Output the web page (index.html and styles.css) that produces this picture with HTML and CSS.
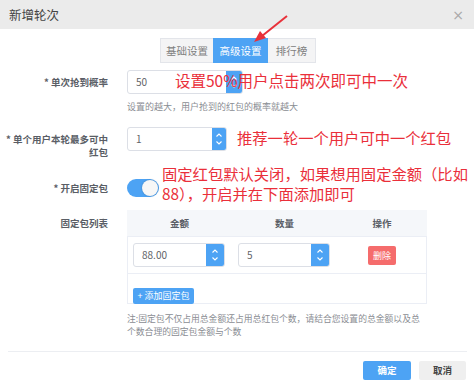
FILE: index.html
```html
<!DOCTYPE html>
<html lang="zh-CN">

<head>
    <meta charset="UTF-8" />
    <title>新增轮次</title>
    <link rel="stylesheet" href="styles.css">
</head>

<body>
    <div class="dialog">
        <div class="dialog-header">
            <span class="dialog-title">新增轮次</span>
            <span class="dialog-close">×</span>
        </div>

        <div class="tabs">
            <span class="tab tab-1">基础设置</span>
            <span class="tab tab-2 active">高级设置</span>
            <span class="tab tab-3">排行榜</span>
        </div>

        <div class="form">
            <div class="form-row row-rate">
                <label class="form-label">* 单次抢到概率</label>
                <div class="form-content">
                    <div class="num-input wide">
                        <span class="num-value">50</span>
                        <span class="spinner">
                            <svg width="8" height="14" viewBox="0 0 8 14"><path d="M1.5 4.5 L4 2 L6.5 4.5 M1.5 9.5 L4 12 L6.5 9.5" fill="none" stroke="#fff" stroke-width="1.1"/></svg>
                        </span>
                    </div>
                    <div class="hint">设置的越大，用户抢到的红包的概率就越大</div>
                </div>
            </div>

            <div class="form-row row-max">
                <label class="form-label two-line">* 单个用户本轮最多可中<br>红包</label>
                <div class="form-content">
                    <div class="num-input narrow">
                        <span class="num-value">1</span>
                        <span class="spinner">
                            <svg width="8" height="14" viewBox="0 0 8 14"><path d="M1.5 4.5 L4 2 L6.5 4.5 M1.5 9.5 L4 12 L6.5 9.5" fill="none" stroke="#fff" stroke-width="1.1"/></svg>
                        </span>
                    </div>
                </div>
            </div>

            <div class="form-row row-switch">
                <label class="form-label">* 开启固定包</label>
                <div class="form-content">
                    <span class="switch"><span class="switch-knob"></span></span>
                </div>
            </div>

            <div class="form-row row-list">
                <label class="form-label">固定包列表</label>
                <div class="form-content">
                    <div class="fixed-table">
                        <div class="table-head">
                            <span>金额</span>
                            <span>数量</span>
                            <span>操作</span>
                        </div>
                        <div class="table-row">
                            <div class="cell">
                                <div class="num-input cell-input">
                                    <span class="num-value">88.00</span>
                                    <span class="spinner">
                                        <svg width="8" height="14" viewBox="0 0 8 14"><path d="M1.5 4.5 L4 2 L6.5 4.5 M1.5 9.5 L4 12 L6.5 9.5" fill="none" stroke="#fff" stroke-width="1.1"/></svg>
                                    </span>
                                </div>
                            </div>
                            <div class="cell">
                                <div class="num-input cell-input">
                                    <span class="num-value">5</span>
                                    <span class="spinner">
                                        <svg width="8" height="14" viewBox="0 0 8 14"><path d="M1.5 4.5 L4 2 L6.5 4.5 M1.5 9.5 L4 12 L6.5 9.5" fill="none" stroke="#fff" stroke-width="1.1"/></svg>
                                    </span>
                                </div>
                            </div>
                            <div class="cell cell-center">
                                <span class="btn-delete">删除</span>
                            </div>
                        </div>
                        <div class="table-add">
                            <span class="btn-add">+ 添加固定包</span>
                        </div>
                    </div>
                    <div class="note">注:固定包不仅占用总金额还占用总红包个数，请结合您设置的总金额以及总<br>个数合理的固定包金额与个数</div>
                </div>
            </div>
        </div>

        <div class="dialog-footer">
            <span class="btn btn-primary">确定</span>
            <span class="btn btn-default">取消</span>
        </div>

        <!-- red notes drawn on top of the screenshot -->
        <svg class="arrow" width="40" height="36" viewBox="0 0 40 36">
            <path d="M37 2 L12 22" stroke="#e8313a" stroke-width="2" fill="none"/>
            <path d="M4 28 L10 17 L16 24 Z" fill="#e8313a"/>
        </svg>
        <div class="annot annot-1">设置50%用户点击两次即可中一次</div>
        <div class="annot annot-2">推荐一轮一个用户可中一个红包</div>
        <div class="annot annot-3">固定红包默认关闭，如果想用固定金额（比如<br>88），开启并在下面添加即可</div>
    </div>
</body>

</html>
```

FILE: styles.css
```css
* {
    margin: 0;
    padding: 0;
    box-sizing: border-box;
}

html,
body {
    width: 474px;
    height: 388px;
    overflow: hidden;
    background: #fff;
    font-family: "Noto Sans CJK SC", "Noto Sans", sans-serif;
    color: #606266;
}

.dialog {
    position: relative;
    width: 474px;
    height: 388px;
}

.dialog-header {
    height: 29px;
    background: #ebebeb;
    display: flex;
    align-items: center;
    justify-content: space-between;
    padding: 0 10px 0 9px;
}

.dialog-title {
    font-size: 12.5px;
    color: #444;
}

.dialog-close {
    font-size: 14px;
    color: #a8a8a8;
    font-family: "DejaVu Sans", sans-serif;
}

.tabs {
    display: flex;
    margin: 9px 0 0 160px;
}

.tab {
    height: 25px;
    line-height: 23px;
    font-size: 10.5px;
    text-align: center;
    color: #808080;
    background: #f4f4f5;
    border: 1px solid #e3e5ea;
}

.tab-1 {
    width: 53px;
    border-right: none;
}

.tab-2 {
    width: 55px;
}

.tab-3 {
    width: 48px;
    border-left: none;
}

.tab.active {
    background: #4da3f4;
    border-color: #4da3f4;
    color: #fff;
}

.form {
    margin-top: 7px;
}

.form-row {
    display: grid;
    grid-template-columns: 127px 1fr;
}

.form-label {
    text-align: right;
    padding-right: 19px;
    font-size: 9.5px;
    font-weight: bold;
    color: #5a5e66;
}

.row-rate .form-label {
    line-height: 24px;
}

.row-max {
    margin-top: 14px;
}

.form-label.two-line {
    line-height: 13px;
    padding-top: 6px;
}

.row-switch {
    margin-top: 20px;
}

.row-switch .form-label {
    line-height: 18px;
}

.row-list {
    margin-top: 13px;
}

.row-list .form-label {
    line-height: 26px;
}

.num-input {
    height: 24px;
    display: flex;
    align-items: stretch;
    border: 1px solid #dcdfe6;
    border-radius: 3px;
    background: #fff;
    overflow: hidden;
}

.num-input.wide {
    width: 116px;
}

.num-input.narrow {
    width: 100px;
}

.num-value {
    flex: 1;
    font-size: 10px;
    line-height: 22px;
    padding-left: 8px;
    color: #606266;
}

.spinner {
    width: 16px;
    background: #4da3f4;
    display: flex;
    align-items: center;
    justify-content: center;
}

.narrow .spinner {
    width: 14px;
}

.cell-input .spinner {
    width: 18px;
}

.hint {
    margin-top: 6px;
    font-size: 9px;
    line-height: 13px;
    color: #8a8d93;
}

.switch {
    width: 32px;
    height: 18px;
    border-radius: 9px;
    background: #4da3f4;
    display: flex;
    justify-content: flex-end;
    align-items: center;
    padding: 1px;
}

.switch-knob {
    width: 16px;
    height: 16px;
    border-radius: 50%;
    background: #f7f7f7;
    box-shadow: 0 0 2px rgba(0, 0, 0, 0.25);
}

.fixed-table {
    width: 300px;
    border: 1px solid #ebeef5;
    border-top: none;
}

.table-head {
    display: grid;
    grid-template-columns: 105px 105px 90px;
    height: 27px;
    background: #f5f7fa;
    margin: 0 -1px;
    font-size: 9.5px;
    font-weight: bold;
    color: #5a5e66;
    border-bottom: 1px solid #ebeef5;
}

.table-head span {
    text-align: center;
    line-height: 26px;
}

.table-row {
    display: grid;
    grid-template-columns: 105px 105px 90px;
    height: 37px;
    border-bottom: 1px solid #ebeef5;
    margin-left: -1px;
}

.cell {
    display: flex;
    align-items: center;
    padding-left: 6px;
}

.cell-center {
    justify-content: center;
    padding-left: 0;
}

.num-input.cell-input {
    width: 92px;
}

.btn-delete {
    width: 28px;
    height: 19px;
    line-height: 19px;
    text-align: center;
    font-size: 9px;
    color: #fff;
    background: #f56c6c;
    border-radius: 2px;
}

.table-add {
    height: 29px;
    padding: 6px 0 0 5px;
}

.btn-add {
    display: inline-block;
    width: 61px;
    height: 16px;
    line-height: 16px;
    text-align: center;
    font-size: 9px;
    color: #fff;
    background: #4da3f4;
    border-radius: 2px;
}

.note {
    margin-top: 8px;
    font-size: 8.8px;
    line-height: 13px;
    color: #8a8d93;
}

.dialog-footer {
    position: absolute;
    left: 8px;
    right: 7px;
    bottom: 0;
    height: 37px;
    border-top: 1px solid #eceef2;
    display: flex;
    justify-content: flex-end;
    gap: 8px;
    padding: 9px 1px 0 0;
}

.btn {
    height: 19px;
    line-height: 19px;
    text-align: center;
    font-size: 9.5px;
    border-radius: 2px;
    font-weight: bold;
}

.btn-primary {
    width: 48px;
    background: #4da3f4;
    color: #fff;
}

.btn-default {
    width: 47px;
    background: #efefef;
    color: #444;
}

.arrow {
    position: absolute;
    left: 250px;
    top: 14px;
}

.annot {
    position: absolute;
    color: #ea2f3a;
    font-size: 15.3px;
    line-height: 20px;
    white-space: nowrap;
}

.annot-1 {
    left: 175px;
    top: 70px;
    font-size: 15.5px;
}

.annot-2 {
    left: 237px;
    top: 127px;
}

.annot-3 {
    left: 162px;
    top: 163px;
}
```
